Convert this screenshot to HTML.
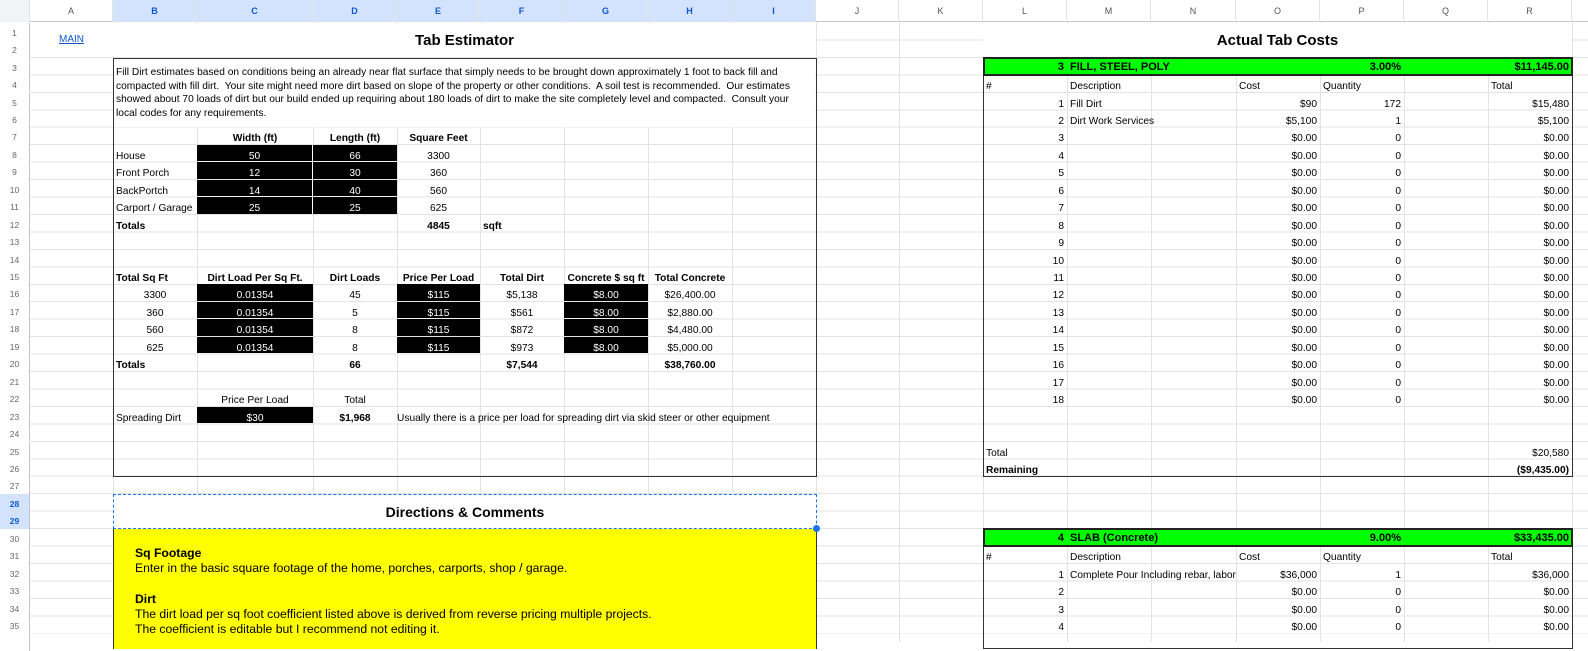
<!DOCTYPE html>
<html><head><meta charset="utf-8">
<style>
*{margin:0;padding:0;box-sizing:border-box}
body{width:1588px;height:642px;overflow:hidden;background:#fff;position:relative;font-family:"Liberation Sans",sans-serif}
.grid{position:absolute;left:30px;top:22.7px;width:1558px;height:620px;
background:repeating-linear-gradient(to bottom,transparent 0,transparent 16.45px,#e2e3e3 16.45px,#e2e3e3 17.45px)}
.v{position:absolute;top:22px;width:1px;height:620px;background:#e2e3e3}
.hdr{position:absolute;left:0;top:0;width:1588px;height:22px;background:#fff;border-bottom:1px solid #c4c7c5}
.hc{position:absolute;top:0;height:22px;line-height:22px;text-align:center;font-size:9px;color:#555;border-right:1px solid #e2e3e3}
.hs{background:#d3e3fd;color:#0b57d0;font-weight:bold}
.rn{position:absolute;left:0;width:30px;height:17.45px;line-height:20px;text-align:center;font-size:8.5px;color:#666;border-right:1px solid #c4c7c5;background:#fff}
.rs{background:#d3e3fd;color:#0b57d0;font-weight:bold}
.c{position:absolute;height:17.45px;line-height:24px;font-size:10.2px;white-space:nowrap;padding:0 3px;color:#000}
.r{text-align:right}.ct{text-align:center}.b{font-weight:bold}
.k{background:#000;color:#fff;height:16.45px;line-height:23px;overflow:hidden}
.L{left:983px;width:84px}.M{left:1067px;width:175px}.O{left:1236px;width:84px}.P{left:1320px;width:84px}.R{left:1488px;width:84px}
.g{font-size:11px;line-height:18px}
.w{position:absolute;background:#fff}
</style></head><body>
<div class="grid"></div>
<div class="v" style="left:113px"></div><div class="v" style="left:197px"></div><div class="v" style="left:313px"></div><div class="v" style="left:397px"></div><div class="v" style="left:480px"></div><div class="v" style="left:564px"></div><div class="v" style="left:648px"></div><div class="v" style="left:732px"></div><div class="v" style="left:816px"></div><div class="v" style="left:899px"></div><div class="v" style="left:983px"></div><div class="v" style="left:1067px"></div><div class="v" style="left:1151px"></div><div class="v" style="left:1236px"></div><div class="v" style="left:1320px"></div><div class="v" style="left:1404px"></div><div class="v" style="left:1488px"></div><div class="v" style="left:1572px"></div>

<div class="hdr">
<div class="hc" style="left:0;width:30px;background:#f1f3f4"></div>
<div class="hc" style="left:30px;width:83px">A</div>
<div class="hc hs" style="left:113px;width:84px">B</div>
<div class="hc hs" style="left:197px;width:116px">C</div>
<div class="hc hs" style="left:313px;width:84px">D</div>
<div class="hc hs" style="left:397px;width:83px">E</div>
<div class="hc hs" style="left:480px;width:84px">F</div>
<div class="hc hs" style="left:564px;width:84px">G</div>
<div class="hc hs" style="left:648px;width:84px">H</div>
<div class="hc hs" style="left:732px;width:84px">I</div>
<div class="hc" style="left:816px;width:83px">J</div>
<div class="hc" style="left:899px;width:84px">K</div>
<div class="hc" style="left:983px;width:84px">L</div>
<div class="hc" style="left:1067px;width:84px">M</div>
<div class="hc" style="left:1151px;width:85px">N</div>
<div class="hc" style="left:1236px;width:84px">O</div>
<div class="hc" style="left:1320px;width:84px">P</div>
<div class="hc" style="left:1404px;width:84px">Q</div>
<div class="hc" style="left:1488px;width:84px">R</div>
</div>

<div class="rn" style="top:22.7px">1</div><div class="rn" style="top:40.15px">2</div><div class="rn" style="top:57.6px">3</div><div class="rn" style="top:75.05px">4</div><div class="rn" style="top:92.5px">5</div><div class="rn" style="top:109.95px">6</div><div class="rn" style="top:127.4px">7</div><div class="rn" style="top:144.85px">8</div><div class="rn" style="top:162.3px">9</div><div class="rn" style="top:179.75px">10</div><div class="rn" style="top:197.2px">11</div><div class="rn" style="top:214.65px">12</div><div class="rn" style="top:232.1px">13</div><div class="rn" style="top:249.55px">14</div><div class="rn" style="top:267px">15</div><div class="rn" style="top:284.45px">16</div><div class="rn" style="top:301.9px">17</div><div class="rn" style="top:319.35px">18</div><div class="rn" style="top:336.8px">19</div><div class="rn" style="top:354.25px">20</div><div class="rn" style="top:371.7px">21</div><div class="rn" style="top:389.15px">22</div><div class="rn" style="top:406.6px">23</div><div class="rn" style="top:424.05px">24</div><div class="rn" style="top:441.5px">25</div><div class="rn" style="top:458.95px">26</div><div class="rn" style="top:476.4px">27</div><div class="rn rs" style="top:493.85px">28</div><div class="rn rs" style="top:511.3px">29</div><div class="rn" style="top:528.75px">30</div><div class="rn" style="top:546.2px">31</div><div class="rn" style="top:563.65px">32</div><div class="rn" style="top:581.1px">33</div><div class="rn" style="top:598.55px">34</div><div class="rn" style="top:616px">35</div><div class="rn" style="top:633.45px"></div>

<div class="w" style="left:30px;top:22.7px;width:83px;height:34px"></div>
<div class="w" style="left:113px;top:22.7px;width:703px;height:34px"></div>
<div class="w" style="left:983px;top:22.7px;width:589px;height:34px"></div>
<div class="w" style="left:114px;top:58px;width:701px;height:68.5px"></div>

<a style="position:absolute;left:30px;top:34px;width:83px;text-align:center;font-size:10px;color:#1155cc;text-decoration:underline">MAIN</a>
<div style="position:absolute;left:113px;top:32px;width:703px;text-align:center;font-size:15px;font-weight:bold">Tab Estimator</div>
<div style="position:absolute;left:983px;top:32px;width:589px;text-align:center;font-size:15px;font-weight:bold">Actual Tab Costs</div>

<div style="position:absolute;left:113px;top:57.6px;width:704px;height:419px;border:1px solid #333"></div>
<div style="position:absolute;left:116px;top:66px;font-size:10.5px;line-height:13.7px;white-space:nowrap;transform:scaleX(0.972);transform-origin:left top">Fill Dirt estimates based on conditions being an already near flat surface that simply needs to be brought down approximately 1 foot to back fill and<br>compacted with fill dirt.&nbsp; Your site might need more dirt based on slope of the property or other conditions.&nbsp; A soil test is recommended.&nbsp; Our estimates<br>showed about 70 loads of dirt but our build ended up requiring about 180 loads of dirt to make the site completely level and compacted.&nbsp; Consult your<br>local codes for any requirements.</div>

<div class="c ct b" style="left:197px;width:116px;top:127.4px">Width (ft)</div>
<div class="c ct b" style="left:313px;width:84px;top:127.4px">Length (ft)</div>
<div class="c ct b" style="left:397px;width:83px;top:127.4px">Square Feet</div>

<div class="c" style="left:113px;top:144.85px">House</div>
<div class="c ct k" style="left:197px;width:115px;top:144.85px">50</div>
<div class="c ct k" style="left:313px;width:84px;top:144.85px">66</div>
<div class="c ct" style="left:397px;width:83px;top:144.85px">3300</div>
<div class="c" style="left:113px;top:162.3px">Front Porch</div>
<div class="c ct k" style="left:197px;width:115px;top:162.3px">12</div>
<div class="c ct k" style="left:313px;width:84px;top:162.3px">30</div>
<div class="c ct" style="left:397px;width:83px;top:162.3px">360</div>
<div class="c" style="left:113px;top:179.75px">BackPortch</div>
<div class="c ct k" style="left:197px;width:115px;top:179.75px">14</div>
<div class="c ct k" style="left:313px;width:84px;top:179.75px">40</div>
<div class="c ct" style="left:397px;width:83px;top:179.75px">560</div>
<div class="c" style="left:113px;top:197.2px">Carport / Garage</div>
<div class="c ct k" style="left:197px;width:115px;top:197.2px">25</div>
<div class="c ct k" style="left:313px;width:84px;top:197.2px">25</div>
<div class="c ct" style="left:397px;width:83px;top:197.2px">625</div>
<div class="c b" style="left:113px;top:214.65px">Totals</div>
<div class="c ct b" style="left:397px;width:83px;top:214.65px">4845</div>
<div class="c b" style="left:480px;top:214.65px">sqft</div>

<div class="c b" style="left:113px;top:267px">Total Sq Ft</div>
<div class="c ct b" style="left:197px;width:116px;top:267px">Dirt Load Per Sq Ft.</div>
<div class="c ct b" style="left:313px;width:84px;top:267px">Dirt Loads</div>
<div class="c ct b" style="left:397px;width:83px;top:267px">Price Per Load</div>
<div class="c ct b" style="left:480px;width:84px;top:267px">Total Dirt</div>
<div class="c ct b" style="left:564px;width:84px;top:267px">Concrete $ sq ft</div>
<div class="c ct b" style="left:648px;width:84px;top:267px">Total Concrete</div>

<div class="c ct" style="left:113px;width:84px;top:284.45px">3300</div>
<div class="c ct k" style="left:197px;width:116px;top:284.45px">0.01354</div>
<div class="c ct" style="left:313px;width:84px;top:284.45px">45</div>
<div class="c ct k" style="left:397px;width:83px;top:284.45px">$115</div>
<div class="c ct" style="left:480px;width:84px;top:284.45px">$5,138</div>
<div class="c ct k" style="left:564px;width:84px;top:284.45px">$8.00</div>
<div class="c ct" style="left:648px;width:84px;top:284.45px">$26,400.00</div>

<div class="c ct" style="left:113px;width:84px;top:301.9px">360</div>
<div class="c ct k" style="left:197px;width:116px;top:301.9px">0.01354</div>
<div class="c ct" style="left:313px;width:84px;top:301.9px">5</div>
<div class="c ct k" style="left:397px;width:83px;top:301.9px">$115</div>
<div class="c ct" style="left:480px;width:84px;top:301.9px">$561</div>
<div class="c ct k" style="left:564px;width:84px;top:301.9px">$8.00</div>
<div class="c ct" style="left:648px;width:84px;top:301.9px">$2,880.00</div>

<div class="c ct" style="left:113px;width:84px;top:319.35px">560</div>
<div class="c ct k" style="left:197px;width:116px;top:319.35px">0.01354</div>
<div class="c ct" style="left:313px;width:84px;top:319.35px">8</div>
<div class="c ct k" style="left:397px;width:83px;top:319.35px">$115</div>
<div class="c ct" style="left:480px;width:84px;top:319.35px">$872</div>
<div class="c ct k" style="left:564px;width:84px;top:319.35px">$8.00</div>
<div class="c ct" style="left:648px;width:84px;top:319.35px">$4,480.00</div>

<div class="c ct" style="left:113px;width:84px;top:336.8px">625</div>
<div class="c ct k" style="left:197px;width:116px;top:336.8px">0.01354</div>
<div class="c ct" style="left:313px;width:84px;top:336.8px">8</div>
<div class="c ct k" style="left:397px;width:83px;top:336.8px">$115</div>
<div class="c ct" style="left:480px;width:84px;top:336.8px">$973</div>
<div class="c ct k" style="left:564px;width:84px;top:336.8px">$8.00</div>
<div class="c ct" style="left:648px;width:84px;top:336.8px">$5,000.00</div>

<div class="c b" style="left:113px;top:354.25px">Totals</div>
<div class="c ct b" style="left:313px;width:84px;top:354.25px">66</div>
<div class="c ct b" style="left:480px;width:84px;top:354.25px">$7,544</div>
<div class="c ct b" style="left:648px;width:84px;top:354.25px">$38,760.00</div>

<div class="c ct" style="left:197px;width:116px;top:389.15px">Price Per Load</div>
<div class="c ct" style="left:313px;width:84px;top:389.15px">Total</div>
<div class="c" style="left:113px;top:406.6px">Spreading Dirt</div>
<div class="c ct k" style="left:197px;width:116px;top:406.6px">$30</div>
<div class="c ct b" style="left:313px;width:84px;top:406.6px">$1,968</div>
<div class="c" style="left:394px;top:406.6px">Usually there is a price per load for spreading dirt via skid steer or other equipment</div>

<div style="position:absolute;left:113px;top:493.5px;width:704px;height:35.5px;background:#fff;border:1px dashed #1a73e8;text-align:center;line-height:35px;font-size:14px;font-weight:bold">Directions &amp; Comments</div>
<div style="position:absolute;left:113px;top:528.75px;width:704px;height:120px;background:#ffff00;border-left:1px solid #333;border-right:1px solid #333;font-size:12.2px;line-height:15.3px;padding:17px 0 0 21px">
<b>Sq Footage</b><br>Enter in the basic square footage of the home, porches, carports, shop / garage.<br><br><b>Dirt</b><br>The dirt load per sq foot coefficient listed above is derived from reverse pricing multiple projects.<br>The coefficient is editable but I recommend not editing it.</div>
<div style="position:absolute;left:813px;top:525px;width:7px;height:7px;border-radius:50%;background:#1a73e8"></div>

<div style="position:absolute;left:983px;top:57.6px;width:590px;height:419px;border:1px solid #333"></div>
<div style="position:absolute;left:983px;top:57px;width:590px;height:18.6px;background:#00ff00;border:2px solid #222"></div>
<div class="c L r b g" style="top:57.6px">3</div>
<div class="c M b g" style="top:57.6px">FILL, STEEL, POLY</div>
<div class="c P r b g" style="top:57.6px">3.00%</div>
<div class="c R r b g" style="top:57.6px">$11,145.00</div>
<div class="c L" style="top:75.05px">#</div><div class="c M" style="top:75.05px">Description</div><div class="c O" style="top:75.05px">Cost</div><div class="c P" style="top:75.05px">Quantity</div><div class="c R" style="top:75.05px">Total</div>
<div class="c L r" style="top:92.5px">1</div><div class="c M" style="top:92.5px">Fill Dirt</div><div class="c O r" style="top:92.5px">$90</div><div class="c P r" style="top:92.5px">172</div><div class="c R r" style="top:92.5px">$15,480</div>
<div class="c L r" style="top:109.95px">2</div><div class="c M" style="top:109.95px">Dirt Work Services</div><div class="c O r" style="top:109.95px">$5,100</div><div class="c P r" style="top:109.95px">1</div><div class="c R r" style="top:109.95px">$5,100</div>
<div class="c L r" style="top:127.4px">3</div><div class="c O r" style="top:127.4px">$0.00</div><div class="c P r" style="top:127.4px">0</div><div class="c R r" style="top:127.4px">$0.00</div>
<div class="c L r" style="top:144.85px">4</div><div class="c O r" style="top:144.85px">$0.00</div><div class="c P r" style="top:144.85px">0</div><div class="c R r" style="top:144.85px">$0.00</div>
<div class="c L r" style="top:162.3px">5</div><div class="c O r" style="top:162.3px">$0.00</div><div class="c P r" style="top:162.3px">0</div><div class="c R r" style="top:162.3px">$0.00</div>
<div class="c L r" style="top:179.75px">6</div><div class="c O r" style="top:179.75px">$0.00</div><div class="c P r" style="top:179.75px">0</div><div class="c R r" style="top:179.75px">$0.00</div>
<div class="c L r" style="top:197.2px">7</div><div class="c O r" style="top:197.2px">$0.00</div><div class="c P r" style="top:197.2px">0</div><div class="c R r" style="top:197.2px">$0.00</div>
<div class="c L r" style="top:214.65px">8</div><div class="c O r" style="top:214.65px">$0.00</div><div class="c P r" style="top:214.65px">0</div><div class="c R r" style="top:214.65px">$0.00</div>
<div class="c L r" style="top:232.1px">9</div><div class="c O r" style="top:232.1px">$0.00</div><div class="c P r" style="top:232.1px">0</div><div class="c R r" style="top:232.1px">$0.00</div>
<div class="c L r" style="top:249.55px">10</div><div class="c O r" style="top:249.55px">$0.00</div><div class="c P r" style="top:249.55px">0</div><div class="c R r" style="top:249.55px">$0.00</div>
<div class="c L r" style="top:267px">11</div><div class="c O r" style="top:267px">$0.00</div><div class="c P r" style="top:267px">0</div><div class="c R r" style="top:267px">$0.00</div>
<div class="c L r" style="top:284.45px">12</div><div class="c O r" style="top:284.45px">$0.00</div><div class="c P r" style="top:284.45px">0</div><div class="c R r" style="top:284.45px">$0.00</div>
<div class="c L r" style="top:301.9px">13</div><div class="c O r" style="top:301.9px">$0.00</div><div class="c P r" style="top:301.9px">0</div><div class="c R r" style="top:301.9px">$0.00</div>
<div class="c L r" style="top:319.35px">14</div><div class="c O r" style="top:319.35px">$0.00</div><div class="c P r" style="top:319.35px">0</div><div class="c R r" style="top:319.35px">$0.00</div>
<div class="c L r" style="top:336.8px">15</div><div class="c O r" style="top:336.8px">$0.00</div><div class="c P r" style="top:336.8px">0</div><div class="c R r" style="top:336.8px">$0.00</div>
<div class="c L r" style="top:354.25px">16</div><div class="c O r" style="top:354.25px">$0.00</div><div class="c P r" style="top:354.25px">0</div><div class="c R r" style="top:354.25px">$0.00</div>
<div class="c L r" style="top:371.7px">17</div><div class="c O r" style="top:371.7px">$0.00</div><div class="c P r" style="top:371.7px">0</div><div class="c R r" style="top:371.7px">$0.00</div>
<div class="c L r" style="top:389.15px">18</div><div class="c O r" style="top:389.15px">$0.00</div><div class="c P r" style="top:389.15px">0</div><div class="c R r" style="top:389.15px">$0.00</div>
<div class="c L" style="top:441.5px">Total</div><div class="c R r" style="top:441.5px">$20,580</div>
<div class="c L b" style="top:458.95px">Remaining</div><div class="c R r b" style="top:458.95px">($9,435.00)</div>

<div style="position:absolute;left:983px;top:528.75px;width:590px;height:120px;border:1px solid #333"></div>
<div style="position:absolute;left:983px;top:528.2px;width:590px;height:18.6px;background:#00ff00;border:2px solid #222"></div>
<div class="c L r b g" style="top:528.75px">4</div>
<div class="c M b g" style="top:528.75px">SLAB (Concrete)</div>
<div class="c P r b g" style="top:528.75px">9.00%</div>
<div class="c R r b g" style="top:528.75px">$33,435.00</div>
<div class="c L" style="top:546.2px">#</div><div class="c M" style="top:546.2px">Description</div><div class="c O" style="top:546.2px">Cost</div><div class="c P" style="top:546.2px">Quantity</div><div class="c R" style="top:546.2px">Total</div>
<div class="c L r" style="top:563.65px">1</div><div class="c M" style="top:563.65px;width:170px">Complete Pour Including rebar, labor</div><div class="c O r" style="top:563.65px">$36,000</div><div class="c P r" style="top:563.65px">1</div><div class="c R r" style="top:563.65px">$36,000</div>
<div class="c L r" style="top:581.1px">2</div><div class="c O r" style="top:581.1px">$0.00</div><div class="c P r" style="top:581.1px">0</div><div class="c R r" style="top:581.1px">$0.00</div>
<div class="c L r" style="top:598.55px">3</div><div class="c O r" style="top:598.55px">$0.00</div><div class="c P r" style="top:598.55px">0</div><div class="c R r" style="top:598.55px">$0.00</div>
<div class="c L r" style="top:616px">4</div><div class="c O r" style="top:616px">$0.00</div><div class="c P r" style="top:616px">0</div><div class="c R r" style="top:616px">$0.00</div>
</body></html>
